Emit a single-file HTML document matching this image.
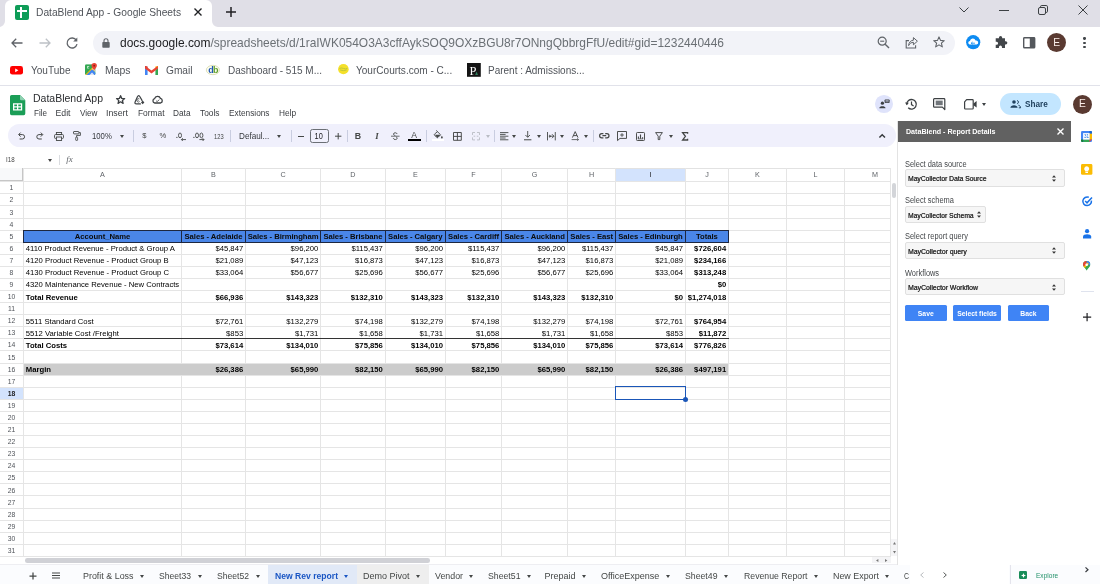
<!DOCTYPE html><html><head><meta charset="utf-8"><title>DataBlend App - Google Sheets</title><style>

*{box-sizing:border-box;margin:0;padding:0}
html,body{width:1100px;height:584px;overflow:hidden;background:#fff}
body{font-family:"Liberation Sans",sans-serif;position:relative;color:#202124;filter:blur(0.4px)}
.a{position:absolute}
.t{position:absolute;white-space:nowrap;line-height:1}
svg{position:absolute;overflow:visible}
/* chrome */
#tabstrip{left:0;top:0;width:1100px;height:27px;background:#e0dfe7}
#tab{left:5px;top:0;width:207px;height:27px;background:#fff;border-radius:6px 6px 0 0}
#navrow{left:0;top:27px;width:1100px;height:30px;background:#fff}
#omni{left:93px;top:31px;width:862px;height:23.5px;border-radius:12px;background:#f2f3f8}
#bmrow{left:0;top:57px;width:1100px;height:29.3px;background:#fff;border-bottom:1.2px solid #e1e2ea}
.bm{font-size:11.6px;color:#3c4043;top:64px}
/* sheets */
.menu{font-size:9.2px;color:#202124;top:108.5px}
#toolbar{left:7.6px;top:123.8px;width:888.4px;height:23.5px;border-radius:12px;background:#f0f0fc}
.gl{position:absolute;background:#e5e5e5}
.ch{position:absolute;font-size:7.2px;color:#4a4d52;text-align:center;top:171px;line-height:8px}
.rh{position:absolute;font-size:6.8px;color:#50545a;text-align:center;left:0;width:23px;line-height:8px}
.c{position:absolute;font-size:7.7px;line-height:12.1px;white-space:nowrap;color:#000;height:12.1px;overflow:visible}
.r{text-align:right}
.b{font-weight:bold}
.st{font-size:8.6px;color:#444746;top:571px;letter-spacing:.1px}
.car{position:absolute;width:0;height:0;border-left:2.6px solid transparent;border-right:2.6px solid transparent;border-top:3px solid #444746}
/* sidebar */
.lab{font-size:8.2px;color:#3c4043;left:905px}
.sel{position:absolute;left:904.5px;margin-top:-0.4px;height:17.2px;background:#f6f6f6;border:1px solid #e0e0e0;border-radius:2px}
.selt{font-size:6.9px;font-weight:bold;color:#222;left:908px}
.btn{position:absolute;top:304.8px;height:16.1px;background:#3f84f5;border-radius:1.5px;color:#fff;font-size:6.8px;font-weight:bold;text-align:center;line-height:17.3px}

</style></head><body>
<div class="a" id="tabstrip"></div>
<div class="a" id="tab"></div>
<svg style="left:-1px;top:21px" width="6" height="6"><path d="M6 0 V6 H0 A6 6 0 0 0 6 0Z" fill="#fff"/></svg>
<svg style="left:212px;top:21px" width="6" height="6"><path d="M0 0 V6 H6 A6 6 0 0 1 0 0Z" fill="#fff"/></svg>
<div class="a" style="left:15px;top:5px;width:14px;height:14.5px;background:#0f9d58;border-radius:2px"></div>
<div class="a" style="left:16.6px;top:10.4px;width:10.9px;height:2px;background:#fff"></div>
<div class="a" style="left:19.8px;top:7.2px;width:2px;height:10.8px;background:#fff"></div>
<div class="t" style="left:36.00px;top:7.88px;font-size:10.3px;color:#50545a;transform:scaleX(0.9933);transform-origin:left top;">DataBlend App - Google Sheets</div>
<svg style="left:194px;top:8px" width="8" height="8"><path d="M0.5 0.5 L7.5 7.5 M7.5 0.5 L0.5 7.5" stroke="#202124" stroke-width="1.4" fill="none"/></svg>
<svg style="left:226px;top:7px" width="10" height="10"><path d="M5 0 V10 M0 5 H10" stroke="#202124" stroke-width="1.5" fill="none"/></svg>
<svg style="left:959px;top:7px" width="10" height="6"><path d="M0.5 0.5 L5 5 L9.5 0.5" stroke="#3c4043" stroke-width="1" fill="none"/></svg>
<div class="a" style="left:999px;top:9.5px;width:10px;height:1px;background:#3c4043"></div>
<svg style="left:1038px;top:5px" width="10" height="10"><rect x="0.5" y="2.5" width="7" height="7" rx="1.5" stroke="#3c4043" fill="none"/><path d="M2.5 2.5 V1.8 A1.3 1.3 0 0 1 3.8 0.5 H8.2 A1.3 1.3 0 0 1 9.5 1.8 V6.2 A1.3 1.3 0 0 1 8.2 7.5 H7.5" stroke="#3c4043" fill="none"/></svg>
<svg style="left:1078px;top:5px" width="10" height="10"><path d="M0.5 0.5 L9.5 9.5 M9.5 0.5 L0.5 9.5" stroke="#3c4043" stroke-width="1" fill="none"/></svg>
<div class="a" id="navrow"></div>
<div class="a" id="omni"></div>
<svg style="left:11px;top:38px" width="12" height="10"><path d="M11.5 5 H1.2 M5.2 0.8 L1 5 L5.2 9.2" stroke="#5f6368" stroke-width="1.3" fill="none"/></svg>
<svg style="left:39px;top:38px" width="12" height="10"><path d="M0.5 5 H10.8 M6.8 0.8 L11 5 L6.8 9.2" stroke="#bdc1c6" stroke-width="1.3" fill="none"/></svg>
<svg style="left:66px;top:37px" width="12" height="12"><path d="M10.3 3.2 A5 5 0 1 0 11 7.2" stroke="#5f6368" stroke-width="1.3" fill="none"/><path d="M11.3 0.5 V4.6 H7.2Z" fill="#5f6368"/></svg>
<svg style="left:102px;top:37.5px" width="8" height="10"><rect x="0.3" y="4" width="7.4" height="5.7" rx="0.8" fill="#5f6368"/><path d="M2 4.2 V2.8 A2 2 0 0 1 6 2.8 V4.2" stroke="#5f6368" stroke-width="1.1" fill="none"/></svg>
<div class="t" style="left:120.00px;top:36.73px;font-size:12.6px;color:#6b7075;transform:scaleX(0.9504);transform-origin:left top;"><span style="color:#202124">docs.google.com</span>/spreadsheets/d/1raIWK054O3A3cffAykSOQ9OXzBGU8r7ONngQbbrgFfU/edit#gid=1232440446</div>
<div class="a" id="bmrow"></div>
<div class="t" style="left:30.50px;top:64.73px;font-size:10.6px;color:#50545a;transform:scaleX(0.9486);transform-origin:left top;">YouTube</div>
<div class="t" style="left:104.50px;top:64.73px;font-size:10.6px;color:#50545a;transform:scaleX(0.9843);transform-origin:left top;">Maps</div>
<div class="t" style="left:165.50px;top:64.73px;font-size:10.6px;color:#50545a;transform:scaleX(0.9577);transform-origin:left top;">Gmail</div>
<div class="t" style="left:227.50px;top:64.73px;font-size:10.6px;color:#50545a;transform:scaleX(0.9446);transform-origin:left top;">Dashboard - 515 M...</div>
<div class="t" style="left:356.30px;top:64.73px;font-size:10.6px;color:#50545a;transform:scaleX(0.9481);transform-origin:left top;">YourCourts.com - C...</div>
<div class="t" style="left:487.50px;top:64.73px;font-size:10.6px;color:#50545a;transform:scaleX(0.9419);transform-origin:left top;">Parent : Admissions...</div>
<!-- YouTube -->
<svg style="left:10.2px;top:65.8px" width="13" height="8.6" viewBox="0 0 13 8.6"><rect width="13" height="8.6" rx="2.4" fill="#f00"/><path d="M5.2 2.4 L8.4 4.3 L5.2 6.2Z" fill="#fff"/></svg>
<!-- Maps -->
<svg style="left:85.2px;top:63.4px" width="12.4" height="12.4" viewBox="0 0 12.4 12.4">
<defs><clipPath id="mclip"><rect x="0" y="1.2" width="10.6" height="10.8" rx="1.4"/></clipPath></defs>
<g clip-path="url(#mclip)"><rect x="0" y="1.2" width="10.6" height="10.8" fill="#34a853"/>
<path d="M0 12 L10.6 1.2 V5 L4 12Z" fill="#fbbc04"/>
<path d="M1.5 12 L7 6.2 L10.6 10 V12Z" fill="#4285f4"/>
<path d="M4.6 12 L7 9.4 L9.4 12Z" fill="#dfe6f5"/>
<path d="M7.2 6 L10.6 2.6 V9.6Z" fill="#e8eaed"/></g>
<path d="M9.2 0 A2.7 2.7 0 0 1 11.9 2.7 C11.9 4.6 9.6 5.6 9.2 8 C8.8 5.6 6.5 4.6 6.5 2.7 A2.7 2.7 0 0 1 9.2 0Z" fill="#ea4335"/>
<circle cx="9.2" cy="2.7" r="0.9" fill="#8c1d13"/>
<path d="M2 3 h2.2 v0.9 h-1.2 v0.8 h1.2 v0.9 h-2.2Z" fill="#d7efdd" opacity=".8"/>
</svg>
<!-- Gmail -->
<svg style="left:145.2px;top:65.5px" width="13" height="9" viewBox="0 0 13 9">
<path d="M0 1.2 V9 H2.6 V3.2Z" fill="#4285f4"/>
<path d="M13 1.2 V9 H10.4 V3.2Z" fill="#34a853"/>
<path d="M10.4 0.6 L13 0 V2 L10.4 4Z" fill="#fbbc04"/>
<path d="M0 0 L2.6 0.6 V4 L0 2Z" fill="#c5221f"/>
<path d="M0.3 0 L6.5 4.4 L12.7 0 L13 2.4 L6.5 7.4 L0 2.4Z" fill="#ea4335"/>
</svg>
<!-- db dashboard -->
<svg style="left:206.3px;top:64.8px" width="13.8" height="10" viewBox="0 0 13.8 10">
<ellipse cx="6.9" cy="5" rx="6.6" ry="4.7" fill="#fbfbef" stroke="#c9cf8e" stroke-width=".6"/>
<text x="2.2" y="8.1" font-family="Liberation Sans, sans-serif" font-weight="bold" font-size="9" fill="#1f56b3">d</text>
<text x="6.9" y="8.1" font-family="Liberation Sans, sans-serif" font-weight="bold" font-size="9" fill="#5f9f2c">b</text>
</svg>
<!-- YourCourts -->
<svg style="left:337.5px;top:64.3px" width="10.8" height="10.4" viewBox="0 0 10.8 10.4">
<ellipse cx="5.4" cy="5.2" rx="5.3" ry="5.1" fill="#f4e02a"/>
<path d="M1.4 4.6 Q3 3.4 5.4 4.4 T9.4 4.4 M2.2 6 Q5.4 7.2 8.6 6" stroke="#b9c23a" stroke-width=".9" fill="none"/>
</svg>
<!-- Parent P -->
<svg style="left:467px;top:63px" width="13.8" height="13.8" viewBox="0 0 13.8 13.8">
<rect width="13.8" height="13.8" fill="#141414"/>
<text x="2.6" y="11.6" font-family="Liberation Serif, serif" font-size="12.5" fill="#fff">P</text>
<path d="M8.2 12 L9.6 8.4 L11 12Z" fill="#2f7d5c"/>
</svg>

<!-- omnibox: zoom-out -->
<svg style="left:877px;top:35.5px" width="13" height="13" viewBox="0 0 13 13"><circle cx="5.2" cy="5.2" r="4" stroke="#5f6368" stroke-width="1.2" fill="none"/><path d="M8.2 8.2 L12 12" stroke="#5f6368" stroke-width="1.4"/><path d="M3.2 5.2 H7.2" stroke="#5f6368" stroke-width="1.1"/></svg>
<!-- share -->
<svg style="left:905px;top:36px" width="13" height="13" viewBox="0 0 13 13"><path d="M4 4.6 H1.2 V12 H10.6 V9.2" stroke="#5f6368" stroke-width="1.1" fill="none"/><path d="M3.6 9.6 C3.8 6.2 6 4.3 8.4 4.2 V1.6 L12.4 5.2 L8.4 8.8 V6.3 C6.4 6.3 4.8 7.4 3.6 9.6Z" stroke="#5f6368" stroke-width="1" fill="none" stroke-linejoin="round"/></svg>
<!-- star -->
<svg style="left:933.2px;top:36.4px" width="12" height="12" viewBox="0 0 12 12"><path d="M6 0.9 L7.5 4.4 L11.3 4.7 L8.4 7.2 L9.3 10.9 L6 8.9 L2.7 10.9 L3.6 7.2 L0.7 4.7 L4.5 4.4Z" stroke="#5f6368" stroke-width="1.1" fill="none" stroke-linejoin="round"/></svg>
<!-- blue ext -->
<svg style="left:966.2px;top:35.4px" width="14.4" height="14.4" viewBox="0 0 14.4 14.4"><circle cx="7.2" cy="7.2" r="7.1" fill="#0d8bf2"/><path d="M3.6 9.6 A1.9 1.9 0 0 1 3.9 5.9 A3 3 0 0 1 9.6 5.5 A2.1 2.1 0 0 1 10.6 9.6Z" fill="#fff"/><path d="M5.2 8.2 H9 M5.2 8.2 L6.6 7 M5.2 8.2 L6.6 9.2" stroke="#0d8bf2" stroke-width=".8" fill="none"/></svg>
<!-- puzzle -->
<svg style="left:994.4px;top:35.4px" width="14" height="14" viewBox="0 0 13 13"><path d="M4.6 2.4 A1.5 1.5 0 0 1 7.6 2.4 V3 H10.2 V5.8 H10.9 A1.5 1.5 0 0 1 10.9 8.8 H10.2 V12 H7.4 V11.2 A1.4 1.4 0 0 0 4.6 11.2 V12 H1.6 V9 H2.4 A1.4 1.4 0 0 0 2.4 6.2 H1.6 V3 H4.6Z" fill="#42464a"/></svg>
<!-- side panel -->
<svg style="left:1022.8px;top:36.8px" width="12.4" height="11.4" viewBox="0 0 12.4 11.4"><rect x="0.7" y="0.7" width="11" height="10" rx="0.8" stroke="#54585d" stroke-width="1.4" fill="#fff"/><rect x="6.8" y="0.7" width="4.9" height="10" fill="#54585d"/></svg>
<!-- avatar -->
<div class="a" style="left:1047.2px;top:33px;width:19.2px;height:19.2px;border-radius:50%;background:#5a3a31"></div>
<div class="t" style="left:1053.3px;top:37.5px;font-size:10.2px;color:#fbeee9">E</div>
<!-- dots -->
<div class="a" style="left:1083.3px;top:37.4px;width:2.3px;height:2.3px;border-radius:50%;background:#42464a"></div>
<div class="a" style="left:1083.3px;top:41.5px;width:2.3px;height:2.3px;border-radius:50%;background:#42464a"></div>
<div class="a" style="left:1083.3px;top:45.6px;width:2.3px;height:2.3px;border-radius:50%;background:#42464a"></div>

<div class="t" style="left:33.00px;top:94.33px;font-size:10.0px;color:#2a2c2f;transform:scaleX(1.0492);transform-origin:left top;">DataBlend App</div>
<div class="t" style="left:33.80px;top:108.94px;font-size:8.7px;color:#3a3d41;transform:scaleX(0.9286);transform-origin:left top;">File</div>
<div class="t" style="left:55.50px;top:108.94px;font-size:8.7px;color:#3a3d41;">Edit</div>
<div class="t" style="left:79.50px;top:108.94px;font-size:8.7px;color:#3a3d41;transform:scaleX(0.9365);transform-origin:left top;">View</div>
<div class="t" style="left:106.00px;top:108.94px;font-size:8.7px;color:#3a3d41;transform:scaleX(1.0122);transform-origin:left top;">Insert</div>
<div class="t" style="left:137.50px;top:108.94px;font-size:8.7px;color:#3a3d41;transform:scaleX(0.9631);transform-origin:left top;">Format</div>
<div class="t" style="left:173.00px;top:108.94px;font-size:8.7px;color:#3a3d41;transform:scaleX(0.9532);transform-origin:left top;">Data</div>
<div class="t" style="left:200.00px;top:108.94px;font-size:8.7px;color:#3a3d41;transform:scaleX(0.9615);transform-origin:left top;">Tools</div>
<div class="t" style="left:229.00px;top:108.94px;font-size:8.7px;color:#3a3d41;transform:scaleX(0.9529);transform-origin:left top;">Extensions</div>
<div class="t" style="left:278.70px;top:108.94px;font-size:8.7px;color:#3a3d41;transform:scaleX(0.9566);transform-origin:left top;">Help</div>
<!-- Sheets logo -->
<svg style="left:10.1px;top:95.4px" width="15.3" height="20.2" viewBox="0 0 15.3 20.2">
<path d="M1.6 0 H10 L15.3 5.3 V18.6 A1.6 1.6 0 0 1 13.7 20.2 H1.6 A1.6 1.6 0 0 1 0 18.6 V1.6 A1.6 1.6 0 0 1 1.6 0Z" fill="#1b9e57"/>
<path d="M10 0 L15.3 5.3 H11.2 A1.2 1.2 0 0 1 10 4.1Z" fill="#8ed1b1"/>
<path d="M3 8.2 H12.2 V15.6 H3Z M4.3 9.5 V11.2 H7 V9.5Z M8.3 9.5 V11.2 H10.9 V9.5Z M4.3 12.5 V14.3 H7 V12.5Z M8.3 12.5 V14.3 H10.9 V12.5Z" fill="#fff" fill-rule="evenodd"/>
</svg>
<!-- star -->
<svg style="left:115.9px;top:94.6px" width="9.2" height="9.2" viewBox="0 0 12 12"><path d="M6 0.9 L7.5 4.4 L11.3 4.7 L8.4 7.2 L9.3 10.9 L6 8.9 L2.7 10.9 L3.6 7.2 L0.7 4.7 L4.5 4.4Z" stroke="#3c4043" stroke-width="1.7" fill="none" stroke-linejoin="round"/></svg>
<!-- move to drive -->
<svg style="left:133.8px;top:94.5px" width="10.6" height="9.8" viewBox="0 0 10.6 9.8"><path d="M6.4 8.9 H2.6 Q0.2 8.9 1.2 6.7 L3.3 2 Q4.7 -0.6 6.1 2 L8 5.4" stroke="#3c4043" stroke-width="1.2" fill="none" stroke-linejoin="round" stroke-linecap="round"/><path d="M5.4 3.9 A1.7 1.7 0 1 0 5.6 6.6 M4.7 5.3 H3.6" stroke="#3c4043" stroke-width=".8" fill="none"/><path d="M8.7 5.5 L10.4 7.4 L8.7 9.3 L7 7.4Z" fill="#3c4043"/></svg>
<!-- cloud done -->
<svg style="left:151.9px;top:95.6px" width="11.2" height="7.6" viewBox="0 0 11.2 7.6"><path d="M2.8 7 A2.2 2.2 0 0 1 2.6 2.7 A3.1 3.1 0 0 1 8.5 2.4 A2.4 2.4 0 0 1 8.6 7Z" stroke="#3c4043" stroke-width="1.3" fill="none"/><path d="M4.2 4.8 L5.2 5.7 L7.2 3.6" stroke="#3c4043" stroke-width=".9" fill="none"/></svg>

<!-- right: presence/activity with lavender circle -->
<div class="a" style="left:874.9px;top:94.9px;width:17.8px;height:17.8px;border-radius:50%;background:#dfe3fb"></div>
<svg style="left:878.6px;top:99.2px" width="11" height="9.6" viewBox="0 0 11 9.6"><circle cx="3.4" cy="4.2" r="1.6" fill="#3c4043"/><path d="M0.3 9.2 C0.3 6.6 6.5 6.6 6.5 9.2Z" fill="#3c4043"/><rect x="5.6" y="0.4" width="5" height="3.6" rx=".8" fill="#3c4043"/><path d="M6.5 1.6 H9.7 M6.5 2.8 H9.7" stroke="#dfe3fb" stroke-width=".6"/></svg>
<!-- history -->
<svg style="left:904.6px;top:97.6px" width="12.4" height="12.4" viewBox="0 0 12.4 12.4"><path d="M1.7 6.4 A4.8 4.8 0 1 1 3.2 9.8" stroke="#3c4043" stroke-width="1.3" fill="none"/><path d="M0 4.6 L1.8 7.2 L3.9 4.8Z" fill="#3c4043"/><path d="M6.5 3.6 V6.6 L8.6 7.9" stroke="#3c4043" stroke-width="1.2" fill="none"/></svg>
<!-- comment -->
<svg style="left:933px;top:98px" width="12.4" height="12" viewBox="0 0 12.4 12"><path d="M1.4 0.6 H11 A0.8 0.8 0 0 1 11.8 1.4 V11.6 L9.4 9.2 H1.4 A0.8 0.8 0 0 1 0.6 8.4 V1.4 A0.8 0.8 0 0 1 1.4 0.6Z" stroke="#3c4043" stroke-width="1.2" fill="none" stroke-linejoin="round"/><rect x="2.7" y="2.6" width="7" height="4.6" fill="#70757a"/></svg>
<!-- camera -->
<svg style="left:964.2px;top:98.6px" width="13" height="10.6" viewBox="0 0 13 10.6"><path d="M2.6 0.6 H8.4 A0.8 0.8 0 0 1 9.2 1.4 V9.2 A0.8 0.8 0 0 1 8.4 10 H1.4 A0.8 0.8 0 0 1 0.6 9.2 V2.8Z" stroke="#3c4043" stroke-width="1.2" fill="none" stroke-linejoin="round"/><path d="M9.4 4.4 L12.6 2 V8.6 L9.4 6.2Z" fill="#3c4043"/></svg>
<div class="car" style="left:982.2px;top:102.8px;border-top-color:#3c4043"></div>
<!-- Share -->
<div class="a" style="left:1000.3px;top:92.6px;width:61.2px;height:22.8px;border-radius:11.4px;background:#c3e6ff"></div>
<svg style="left:1009.6px;top:100px" width="11" height="8" viewBox="0 0 11 8"><circle cx="4" cy="2" r="1.8" fill="#21425f"/><path d="M0.4 7.8 C0.4 4.4 7.6 4.4 7.6 7.8Z" fill="#21425f"/><path d="M7.2 0.4 A1.8 1.8 0 0 1 7.2 3.8 M8.4 5.2 C9.8 5.6 10.6 6.4 10.6 7.8 H8.8" stroke="#21425f" stroke-width="1" fill="none"/></svg>
<!-- avatar -->
<div class="a" style="left:1073.1px;top:94.7px;width:19px;height:19px;border-radius:50%;background:#5a3a31"></div>
<div class="t" style="left:1079.1px;top:99.2px;font-size:10.2px;color:#fbeee9">E</div>

<div class="t" style="left:1024.50px;top:99.44px;font-size:9.4px;color:#21425f;transform:scaleX(0.8748);transform-origin:left top;font-weight:bold;">Share</div>
<div class="a" id="toolbar"></div>
<!-- toolbar icons, centre y=136 -->

<!-- undo c=22 -->
<svg style="left:18.4px;top:132.4px" width="7.4" height="7.6" viewBox="0 0 7.4 7.6"><path d="M1 2.6 H4.4 A2.2 2.2 0 0 1 4.4 7 H1.6" stroke="#444746" stroke-width="1" fill="none"/><path d="M2.6 0.6 L0.6 2.6 L2.6 4.6" stroke="#444746" stroke-width="1" fill="none"/></svg>
<!-- redo c=40 -->
<svg style="left:36.4px;top:132.4px" width="7.4" height="7.6" viewBox="0 0 7.4 7.6"><path d="M6.4 2.6 H3 A2.2 2.2 0 0 0 3 7 H5.8" stroke="#444746" stroke-width="1" fill="none"/><path d="M4.8 0.6 L6.8 2.6 L4.8 4.6" stroke="#444746" stroke-width="1" fill="none"/></svg>
<!-- print c=58.8 -->
<svg style="left:53.8px;top:131.6px" width="10" height="9" viewBox="0 0 10 9"><rect x="2.4" y="0.5" width="5.2" height="2" stroke="#444746" stroke-width=".9" fill="none"/><rect x="0.5" y="2.6" width="9" height="3.8" rx=".9" stroke="#444746" stroke-width=".9" fill="none"/><rect x="2.4" y="5" width="5.2" height="3.5" stroke="#444746" stroke-width=".9" fill="#f0f0fc"/></svg>
<!-- paint format c=77 -->
<svg style="left:73px;top:131.2px" width="8" height="10" viewBox="0 0 8 10"><rect x="0.5" y="0.5" width="5.4" height="2.4" rx=".5" stroke="#444746" stroke-width=".9" fill="none"/><path d="M5.9 1.6 H7.4 V4.4 H3.6 V6.2" stroke="#444746" stroke-width=".9" fill="none"/><rect x="2.7" y="6.2" width="1.9" height="3.2" rx=".4" stroke="#444746" stroke-width=".8" fill="none"/></svg>
<!-- $ % -->
<!-- .0<- c=180.6 -->
<svg style="left:175.6px;top:131.6px" width="10.5" height="9.4" viewBox="0 0 10.5 9.4"><circle cx="0.9" cy="5.4" r=".6" fill="#444746"/><ellipse cx="4" cy="3.4" rx="1.5" ry="2.4" stroke="#444746" stroke-width=".9" fill="none"/><path d="M10 7.6 H5.4 M6.8 6.2 L5.4 7.6 L6.8 9" stroke="#444746" stroke-width=".9" fill="none"/></svg>
<!-- .00-> c=199.4 -->
<svg style="left:193.2px;top:131.6px" width="12.5" height="9.4" viewBox="0 0 12.5 9.4"><circle cx="0.9" cy="5.4" r=".6" fill="#444746"/><ellipse cx="4" cy="3.4" rx="1.5" ry="2.4" stroke="#444746" stroke-width=".9" fill="none"/><ellipse cx="8.4" cy="3.4" rx="1.5" ry="2.4" stroke="#444746" stroke-width=".9" fill="none"/><path d="M6.4 7.6 H11 M9.6 6.2 L11 7.6 L9.6 9" stroke="#444746" stroke-width=".9" fill="none"/></svg>
<!-- minus c=301.1 -->
<div class="a" style="left:298.1px;top:135.6px;width:6px;height:1px;background:#444746"></div>
<!-- size box -->
<div class="a" style="left:309.5px;top:128.7px;width:19.3px;height:13.9px;border:0.9px solid #6b6f75;border-radius:2.4px"></div>
<!-- plus c=337.7 -->
<svg style="left:334.5px;top:132.9px" width="6.4" height="6.4" viewBox="0 0 6.4 6.4"><path d="M3.2 0 V6.4 M0 3.2 H6.4" stroke="#444746" stroke-width="1"/></svg>
<!-- strikethrough S c=395.3 -->
<svg style="left:391px;top:132px" width="8.6" height="8.4" viewBox="0 0 8.6 8.4"><path d="M6.2 2 C5.8 0.4 2.6 0.3 2.5 2 C2.5 3 3.6 3.4 4.3 3.6 M2.2 6.2 C2.6 8 6.2 8 6.2 6.2 C6.2 5.6 5.8 5.2 5.2 4.9" stroke="#444746" stroke-width=".9" fill="none"/><path d="M0 4.2 H8.6" stroke="#444746" stroke-width=".8"/></svg>
<!-- text colour A c=414.1 -->
<div class="a" style="left:407.8px;top:139.2px;width:13px;height:1.8px;background:#000"></div>
<!-- fill bucket c=437.7 -->
<svg style="left:433.6px;top:130px" width="9" height="8.6" viewBox="0 0 9 8.6"><path d="M2.2 0.4 L6.6 4.8 L4 7.4 A0.9 0.9 0 0 1 2.7 7.4 L0.6 5.3 A0.9 0.9 0 0 1 0.6 4 L3.5 1.7" stroke="#444746" stroke-width=".9" fill="none"/><path d="M0.9 4.8 H6.4 L4 7.2 A0.8 0.8 0 0 1 2.8 7.2Z" fill="#444746"/><path d="M7.9 5.8 C8.4 6.6 8.8 7 8.8 7.5 A0.9 0.9 0 0 1 7 7.5 C7 7 7.4 6.6 7.9 5.8Z" fill="#444746"/></svg>
<div class="a" style="left:431.6px;top:139.4px;width:12.6px;height:1.8px;background:#fff"></div>
<!-- borders c=457.3 -->
<svg style="left:452.9px;top:131.6px" width="8.8" height="8.8" viewBox="0 0 8.8 8.8"><path d="M0.5 0.5 H8.3 V8.3 H0.5Z M4.4 0.5 V8.3 M0.5 4.4 H8.3" stroke="#444746" stroke-width=".95" fill="none"/></svg>
<!-- merge (disabled) c=476.4 -->
<svg style="left:472.4px;top:131.8px" width="8" height="8.4" viewBox="0 0 8 8.4"><path d="M0.5 3 V0.5 H3 M5 0.5 H7.5 V3 M7.5 5.4 V7.9 H5 M3 7.9 H0.5 V5.4" stroke="#b9bcc4" stroke-width=".9" fill="none"/><path d="M1.6 4.2 H3.2 M4.8 4.2 H6.4" stroke="#b9bcc4" stroke-width=".9"/></svg>
<!-- align c=504.1 -->
<svg style="left:500px;top:131.8px" width="8.4" height="8.4" viewBox="0 0 8.4 8.4"><path d="M0 0.6 H8.4 M0 2.4 H5.6 M0 4.2 H8.4 M0 6 H5.6 M0 7.8 H8.4" stroke="#444746" stroke-width=".9"/></svg>
<!-- valign c=527.7 -->
<svg style="left:524px;top:131.4px" width="7.4" height="9.4" viewBox="0 0 7.4 9.4"><path d="M3.7 0 V6.2 M1.4 4 L3.7 6.3 L6 4" stroke="#444746" stroke-width=".9" fill="none"/><path d="M0 8.8 H7.4" stroke="#444746" stroke-width="1"/></svg>
<!-- wrap c=551.4 -->
<svg style="left:547px;top:131.8px" width="8.8" height="8.4" viewBox="0 0 8.8 8.4"><path d="M0.5 0 V8.4 M8.3 0 V8.4" stroke="#444746" stroke-width=".9"/><path d="M1.8 4.2 H7 M5 2.2 L7 4.2 L5 6.2" stroke="#444746" stroke-width=".9" fill="none"/><path d="M2.4 2.4 L4.2 4.2 L2.4 6Z" fill="#444746"/></svg>
<!-- rotate c=575 -->
<svg style="left:570.6px;top:131.4px" width="9" height="9.6" viewBox="0 0 9 9.6"><path d="M1.4 6.6 L4.2 0.6 L7 6.6 M2.4 4.6 H6" stroke="#444746" stroke-width=".95" fill="none"/><path d="M0.6 8.6 H7.2 M6.2 7.4 L7.6 8.6 L6.2 9.6" stroke="#444746" stroke-width=".8" fill="none"/></svg>
<!-- link c=603.9 -->
<svg style="left:598.6px;top:133.4px" width="10.6" height="5.4" viewBox="0 0 10.6 5.4"><path d="M4.4 0.6 H2.7 A2.1 2.1 0 0 0 2.7 4.8 H4.4 M6.2 0.6 H7.9 A2.1 2.1 0 0 1 7.9 4.8 H6.2 M3.4 2.7 H7.2" stroke="#444746" stroke-width="1.2" fill="none"/></svg>
<!-- add comment c=622.3 -->
<svg style="left:617.4px;top:131.2px" width="10" height="10" viewBox="0 0 10 10"><path d="M0.5 0.5 H9.5 V7.4 H3 L0.5 9.6Z" stroke="#444746" stroke-width=".95" fill="none" stroke-linejoin="round"/><path d="M5 2.2 V5.8 M3.2 4 H6.8" stroke="#444746" stroke-width=".9"/></svg>
<!-- chart c=640.7 -->
<svg style="left:636.2px;top:131.6px" width="9" height="9" viewBox="0 0 9 9"><rect x="0.5" y="0.5" width="8" height="8" rx=".8" stroke="#444746" stroke-width=".95" fill="none"/><path d="M2.4 6.8 V4.4 M4.5 6.8 V2.4 M6.6 6.8 V5.2" stroke="#444746" stroke-width="1.1"/><path d="M1.8 6.9 H7.2" stroke="#444746" stroke-width=".7"/></svg>
<!-- filter c=659 -->
<svg style="left:655px;top:132px" width="8" height="8.4" viewBox="0 0 8 8.4"><path d="M0.6 0.6 H7.4 L4.8 4.2 V7.6 H3.2 V4.2Z" stroke="#444746" stroke-width=".95" fill="none" stroke-linejoin="round"/></svg>
<!-- sigma c=685.4 -->
<svg style="left:682.4px;top:131.8px" width="6" height="8.6" viewBox="0 0 6 8.6"><path d="M5.6 1.8 V0.6 H0.6 L3.4 4.3 L0.6 8 H5.6 V6.8" stroke="#444746" stroke-width="1.3" fill="none" stroke-linejoin="miter"/></svg>
<!-- collapse chevron c=881.8 -->
<svg style="left:878.6px;top:134px" width="6.4" height="4" viewBox="0 0 6.4 4"><path d="M0.4 3.6 L3.2 0.7 L6 3.6" stroke="#33363a" stroke-width="1.4" fill="none"/></svg>


<div class="t" style="left:92.30px;top:131.79px;font-size:8.4px;color:#35383c;transform:scaleX(0.9243);transform-origin:left top;">100%</div>
<div class="t" style="left:142.20px;top:132.27px;font-size:7.6px;color:#444746;">$</div>
<div class="t" style="left:159.40px;top:132.37px;font-size:7.6px;color:#444746;">%</div>
<div class="t" style="left:214.00px;top:132.67px;font-size:7.0px;color:#444746;transform:scaleX(0.8214);transform-origin:left top;">123</div>
<div class="t" style="left:239.40px;top:131.79px;font-size:8.4px;color:#35383c;transform:scaleX(0.9743);transform-origin:left top;">Defaul...</div>
<div class="t" style="left:314.44px;top:131.79px;font-size:8.4px;color:#202124;transform:scaleX(0.8791);transform-origin:center top;">10</div>
<div class="t" style="left:354.82px;top:131.65px;font-size:8.8px;color:#444746;font-weight:bold;">B</div>
<div class="t" style="left:375.18px;top:131.65px;font-size:8.8px;color:#444746;font-weight:bold;font-style:italic;font-family:'Liberation Serif',serif;">I</div>
<div class="t" style="left:411.33px;top:130.92px;font-size:8.6px;color:#444746;">A</div>
<div class="a" style="left:132.6px;top:130px;width:1px;height:12px;background:#c9cde0"></div>
<div class="a" style="left:229.9px;top:130px;width:1px;height:12px;background:#c9cde0"></div>
<div class="a" style="left:290.5px;top:130px;width:1px;height:12px;background:#c9cde0"></div>
<div class="a" style="left:346.7px;top:130px;width:1px;height:12px;background:#c9cde0"></div>
<div class="a" style="left:425.7px;top:130px;width:1px;height:12px;background:#c9cde0"></div>
<div class="a" style="left:494.1px;top:130px;width:1px;height:12px;background:#c9cde0"></div>
<div class="a" style="left:592.7px;top:130px;width:1px;height:12px;background:#c9cde0"></div>
<div class="car" style="left:120.19999999999999px;top:134.8px;border-top-color:#444746"></div>
<div class="car" style="left:277.40000000000003px;top:134.8px;border-top-color:#444746"></div>
<div class="car" style="left:485.90000000000003px;top:134.8px;border-top-color:#b9bcc4"></div>
<div class="car" style="left:512.3000000000001px;top:134.8px;border-top-color:#444746"></div>
<div class="car" style="left:536.5px;top:134.8px;border-top-color:#444746"></div>
<div class="car" style="left:559.6px;top:134.8px;border-top-color:#444746"></div>
<div class="car" style="left:583.7px;top:134.8px;border-top-color:#444746"></div>
<div class="car" style="left:669.1px;top:134.8px;border-top-color:#444746"></div>
<div class="t" style="left:5.80px;top:155.51px;font-size:7.2px;color:#444;transform:scaleX(0.8600);transform-origin:left top;">I18</div>
<div class="car" style="left:47.5px;top:158.5px;border-top-color:#444"></div>
<div class="a" style="left:59px;top:155px;width:1px;height:10px;background:#dadce0"></div>
<div class="t" style="left:66.3px;top:154.6px;font-size:9px;color:#62666b;font-style:italic;font-family:'Liberation Serif',serif">fx</div>
<div class="a" style="left:0;top:168px;width:891px;height:13.5px;background:#fff;border-top:1px solid #e2e2e2"></div>
<div class="a" style="left:0;top:168px;width:23.5px;height:13.5px;background:#f8f9fa;border-right:2.5px solid #c6c6c6;border-bottom:2px solid #c6c6c6"></div>
<div class="a" style="left:615.7px;top:168.5px;width:69.69999999999993px;height:13px;background:#d3e3fd"></div>
<div class="a" style="left:0;top:387.228px;width:23.5px;height:12.084px;background:#d3e3fd"></div>
<div class="a" style="left:23.5px;top:230.13600000000002px;width:705.0px;height:12.084px;background:#4a86e8"></div>
<div class="a" style="left:23.5px;top:363.06px;width:705.0px;height:12.084px;background:#cccccc"></div>
<div class="gl" style="left:0;top:181.30px;width:891px;height:1px"></div>
<div class="gl" style="left:0;top:193.38px;width:891px;height:1px"></div>
<div class="gl" style="left:0;top:205.47px;width:891px;height:1px"></div>
<div class="gl" style="left:0;top:217.55px;width:891px;height:1px"></div>
<div class="gl" style="left:0;top:229.64px;width:891px;height:1px"></div>
<div class="gl" style="left:0;top:241.72px;width:891px;height:1px"></div>
<div class="gl" style="left:0;top:253.80px;width:891px;height:1px"></div>
<div class="gl" style="left:0;top:265.89px;width:891px;height:1px"></div>
<div class="gl" style="left:0;top:277.97px;width:891px;height:1px"></div>
<div class="gl" style="left:0;top:290.06px;width:891px;height:1px"></div>
<div class="gl" style="left:0;top:302.14px;width:891px;height:1px"></div>
<div class="gl" style="left:0;top:314.22px;width:891px;height:1px"></div>
<div class="gl" style="left:0;top:326.31px;width:891px;height:1px"></div>
<div class="gl" style="left:0;top:338.39px;width:891px;height:1px"></div>
<div class="gl" style="left:0;top:350.48px;width:891px;height:1px"></div>
<div class="gl" style="left:0;top:362.56px;width:891px;height:1px"></div>
<div class="gl" style="left:0;top:374.64px;width:891px;height:1px"></div>
<div class="gl" style="left:0;top:386.73px;width:891px;height:1px"></div>
<div class="gl" style="left:0;top:398.81px;width:891px;height:1px"></div>
<div class="gl" style="left:0;top:410.90px;width:891px;height:1px"></div>
<div class="gl" style="left:0;top:422.98px;width:891px;height:1px"></div>
<div class="gl" style="left:0;top:435.06px;width:891px;height:1px"></div>
<div class="gl" style="left:0;top:447.15px;width:891px;height:1px"></div>
<div class="gl" style="left:0;top:459.23px;width:891px;height:1px"></div>
<div class="gl" style="left:0;top:471.32px;width:891px;height:1px"></div>
<div class="gl" style="left:0;top:483.40px;width:891px;height:1px"></div>
<div class="gl" style="left:0;top:495.48px;width:891px;height:1px"></div>
<div class="gl" style="left:0;top:507.57px;width:891px;height:1px"></div>
<div class="gl" style="left:0;top:519.65px;width:891px;height:1px"></div>
<div class="gl" style="left:0;top:531.74px;width:891px;height:1px"></div>
<div class="gl" style="left:0;top:543.82px;width:891px;height:1px"></div>
<div class="gl" style="left:0;top:555.90px;width:891px;height:1px"></div>
<div class="gl" style="left:23.0px;top:168px;width:1px;height:388.9px"></div>
<div class="gl" style="left:181.0px;top:168px;width:1px;height:388.9px"></div>
<div class="gl" style="left:245.0px;top:168px;width:1px;height:388.9px"></div>
<div class="gl" style="left:320.2px;top:168px;width:1px;height:388.9px"></div>
<div class="gl" style="left:384.7px;top:168px;width:1px;height:388.9px"></div>
<div class="gl" style="left:444.9px;top:168px;width:1px;height:388.9px"></div>
<div class="gl" style="left:501.2px;top:168px;width:1px;height:388.9px"></div>
<div class="gl" style="left:567.1px;top:168px;width:1px;height:388.9px"></div>
<div class="gl" style="left:615.2px;top:168px;width:1px;height:388.9px"></div>
<div class="gl" style="left:684.9px;top:168px;width:1px;height:388.9px"></div>
<div class="gl" style="left:728.0px;top:168px;width:1px;height:388.9px"></div>
<div class="gl" style="left:785.9px;top:168px;width:1px;height:388.9px"></div>
<div class="gl" style="left:844.2px;top:168px;width:1px;height:388.9px"></div>
<div class="gl" style="left:890.2px;top:168px;width:1px;height:388.9px"></div>
<div class="a" style="left:23.5px;top:363.56px;width:704.5px;height:11.084px;background:#cccccc"></div>
<div class="a" style="left:23.0px;top:229.63600000000002px;width:706.0px;height:13.084px;background:#4a86e8;border:1px solid #1d2740"></div>
<div class="a" style="left:181.0px;top:230.13600000000002px;width:1px;height:12.084px;background:#1d2740"></div>
<div class="a" style="left:245.0px;top:230.13600000000002px;width:1px;height:12.084px;background:#1d2740"></div>
<div class="a" style="left:320.2px;top:230.13600000000002px;width:1px;height:12.084px;background:#1d2740"></div>
<div class="a" style="left:384.7px;top:230.13600000000002px;width:1px;height:12.084px;background:#1d2740"></div>
<div class="a" style="left:444.9px;top:230.13600000000002px;width:1px;height:12.084px;background:#1d2740"></div>
<div class="a" style="left:501.2px;top:230.13600000000002px;width:1px;height:12.084px;background:#1d2740"></div>
<div class="a" style="left:567.1px;top:230.13600000000002px;width:1px;height:12.084px;background:#1d2740"></div>
<div class="a" style="left:615.2px;top:230.13600000000002px;width:1px;height:12.084px;background:#1d2740"></div>
<div class="a" style="left:684.9px;top:230.13600000000002px;width:1px;height:12.084px;background:#1d2740"></div>
<div class="a" style="left:23.5px;top:338.192px;width:705.0px;height:1.3px;background:#333"></div>
<div class="ch" style="left:23.5px;width:158.0px;color:#5f6368">A</div>
<div class="ch" style="left:181.5px;width:64.0px;color:#5f6368">B</div>
<div class="ch" style="left:245.5px;width:75.19999999999999px;color:#5f6368">C</div>
<div class="ch" style="left:320.7px;width:64.5px;color:#5f6368">D</div>
<div class="ch" style="left:385.2px;width:60.19999999999999px;color:#5f6368">E</div>
<div class="ch" style="left:445.4px;width:56.30000000000001px;color:#5f6368">F</div>
<div class="ch" style="left:501.7px;width:65.90000000000003px;color:#5f6368">G</div>
<div class="ch" style="left:567.6px;width:48.10000000000002px;color:#5f6368">H</div>
<div class="ch" style="left:615.7px;width:69.69999999999993px;color:#202124">I</div>
<div class="ch" style="left:685.4px;width:43.10000000000002px;color:#5f6368">J</div>
<div class="ch" style="left:728.5px;width:57.89999999999998px;color:#5f6368">K</div>
<div class="ch" style="left:786.4px;width:58.30000000000007px;color:#5f6368">L</div>
<div class="ch" style="left:844.7px;width:60.59999999999991px;color:#5f6368">M</div>
<div class="rh" style="top:184.40px;">1</div>
<div class="rh" style="top:196.48px;">2</div>
<div class="rh" style="top:208.57px;">3</div>
<div class="rh" style="top:220.65px;">4</div>
<div class="rh" style="top:232.74px;">5</div>
<div class="rh" style="top:244.82px;">6</div>
<div class="rh" style="top:256.90px;">7</div>
<div class="rh" style="top:268.99px;">8</div>
<div class="rh" style="top:281.07px;">9</div>
<div class="rh" style="top:293.16px;">10</div>
<div class="rh" style="top:305.24px;">11</div>
<div class="rh" style="top:317.32px;">12</div>
<div class="rh" style="top:329.41px;">13</div>
<div class="rh" style="top:341.49px;">14</div>
<div class="rh" style="top:353.58px;">15</div>
<div class="rh" style="top:365.66px;">16</div>
<div class="rh" style="top:377.74px;">17</div>
<div class="rh" style="top:389.83px;font-weight:bold;color:#202124;">18</div>
<div class="rh" style="top:401.91px;">19</div>
<div class="rh" style="top:414.00px;">20</div>
<div class="rh" style="top:426.08px;">21</div>
<div class="rh" style="top:438.16px;">22</div>
<div class="rh" style="top:450.25px;">23</div>
<div class="rh" style="top:462.33px;">24</div>
<div class="rh" style="top:474.42px;">25</div>
<div class="rh" style="top:486.50px;">26</div>
<div class="rh" style="top:498.58px;">27</div>
<div class="rh" style="top:510.67px;">28</div>
<div class="rh" style="top:522.75px;">29</div>
<div class="rh" style="top:534.84px;">30</div>
<div class="rh" style="top:546.92px;">31</div>
<div class="c b" style="left:23.5px;top:231.24px;width:158.0px;text-align:center;color:#0b0b0b;letter-spacing:-0.05px">Account_Name</div>
<div class="c b" style="left:181.5px;top:231.24px;width:64.0px;text-align:center;color:#0b0b0b;letter-spacing:-0.05px">Sales - Adelaide</div>
<div class="c b" style="left:245.5px;top:231.24px;width:75.19999999999999px;text-align:center;color:#0b0b0b;letter-spacing:-0.05px">Sales - Birmingham</div>
<div class="c b" style="left:320.7px;top:231.24px;width:64.5px;text-align:center;color:#0b0b0b;letter-spacing:-0.05px">Sales - Brisbane</div>
<div class="c b" style="left:385.2px;top:231.24px;width:60.19999999999999px;text-align:center;color:#0b0b0b;letter-spacing:-0.05px">Sales - Calgary</div>
<div class="c b" style="left:445.4px;top:231.24px;width:56.30000000000001px;text-align:center;color:#0b0b0b;letter-spacing:-0.05px">Sales - Cardiff</div>
<div class="c b" style="left:501.7px;top:231.24px;width:65.90000000000003px;text-align:center;color:#0b0b0b;letter-spacing:-0.05px">Sales - Auckland</div>
<div class="c b" style="left:567.6px;top:231.24px;width:48.10000000000002px;text-align:center;color:#0b0b0b;letter-spacing:-0.05px">Sales - East</div>
<div class="c b" style="left:615.7px;top:231.24px;width:69.69999999999993px;text-align:center;color:#0b0b0b;letter-spacing:-0.05px">Sales - Edinburgh</div>
<div class="c b" style="left:685.4px;top:231.24px;width:43.10000000000002px;text-align:center;color:#0b0b0b;letter-spacing:-0.05px">Totals</div>
<div class="c" style="left:25.8px;top:243.17px">4110 Product Revenue - Product &amp; Group A</div>
<div class="c r" style="left:181.5px;top:243.17px;width:61.7px">$45,847</div>
<div class="c r" style="left:245.5px;top:243.17px;width:72.89999999999999px">$96,200</div>
<div class="c r" style="left:320.7px;top:243.17px;width:62.2px">$115,437</div>
<div class="c r" style="left:385.2px;top:243.17px;width:57.89999999999999px">$96,200</div>
<div class="c r" style="left:445.4px;top:243.17px;width:54.000000000000014px">$115,437</div>
<div class="c r" style="left:501.7px;top:243.17px;width:63.60000000000004px">$96,200</div>
<div class="c r" style="left:567.6px;top:243.17px;width:45.800000000000026px">$115,437</div>
<div class="c r" style="left:615.7px;top:243.17px;width:67.39999999999993px">$45,847</div>
<div class="c r b" style="left:685.4px;top:243.17px;width:40.800000000000026px">$726,604</div>
<div class="c" style="left:25.8px;top:255.25px">4120 Product Revenue - Product Group B</div>
<div class="c r" style="left:181.5px;top:255.25px;width:61.7px">$21,089</div>
<div class="c r" style="left:245.5px;top:255.25px;width:72.89999999999999px">$47,123</div>
<div class="c r" style="left:320.7px;top:255.25px;width:62.2px">$16,873</div>
<div class="c r" style="left:385.2px;top:255.25px;width:57.89999999999999px">$47,123</div>
<div class="c r" style="left:445.4px;top:255.25px;width:54.000000000000014px">$16,873</div>
<div class="c r" style="left:501.7px;top:255.25px;width:63.60000000000004px">$47,123</div>
<div class="c r" style="left:567.6px;top:255.25px;width:45.800000000000026px">$16,873</div>
<div class="c r" style="left:615.7px;top:255.25px;width:67.39999999999993px">$21,089</div>
<div class="c r b" style="left:685.4px;top:255.25px;width:40.800000000000026px">$234,166</div>
<div class="c" style="left:25.8px;top:267.34px">4130 Product Revenue - Product Group C</div>
<div class="c r" style="left:181.5px;top:267.34px;width:61.7px">$33,064</div>
<div class="c r" style="left:245.5px;top:267.34px;width:72.89999999999999px">$56,677</div>
<div class="c r" style="left:320.7px;top:267.34px;width:62.2px">$25,696</div>
<div class="c r" style="left:385.2px;top:267.34px;width:57.89999999999999px">$56,677</div>
<div class="c r" style="left:445.4px;top:267.34px;width:54.000000000000014px">$25,696</div>
<div class="c r" style="left:501.7px;top:267.34px;width:63.60000000000004px">$56,677</div>
<div class="c r" style="left:567.6px;top:267.34px;width:45.800000000000026px">$25,696</div>
<div class="c r" style="left:615.7px;top:267.34px;width:67.39999999999993px">$33,064</div>
<div class="c r b" style="left:685.4px;top:267.34px;width:40.800000000000026px">$313,248</div>
<div class="c" style="left:25.8px;top:279.42px">4320 Maintenance Revenue - New Contracts</div>
<div class="c r b" style="left:685.4px;top:279.42px;width:40.800000000000026px">$0</div>
<div class="c b" style="left:25.8px;top:291.51px">Total Revenue</div>
<div class="c r b" style="left:181.5px;top:291.51px;width:61.7px">$66,936</div>
<div class="c r b" style="left:245.5px;top:291.51px;width:72.89999999999999px">$143,323</div>
<div class="c r b" style="left:320.7px;top:291.51px;width:62.2px">$132,310</div>
<div class="c r b" style="left:385.2px;top:291.51px;width:57.89999999999999px">$143,323</div>
<div class="c r b" style="left:445.4px;top:291.51px;width:54.000000000000014px">$132,310</div>
<div class="c r b" style="left:501.7px;top:291.51px;width:63.60000000000004px">$143,323</div>
<div class="c r b" style="left:567.6px;top:291.51px;width:45.800000000000026px">$132,310</div>
<div class="c r b" style="left:615.7px;top:291.51px;width:67.39999999999993px">$0</div>
<div class="c r b" style="left:685.4px;top:291.51px;width:40.800000000000026px">$1,274,018</div>
<div class="c" style="left:25.8px;top:315.67px">5511 Standard Cost</div>
<div class="c r" style="left:181.5px;top:315.67px;width:61.7px">$72,761</div>
<div class="c r" style="left:245.5px;top:315.67px;width:72.89999999999999px">$132,279</div>
<div class="c r" style="left:320.7px;top:315.67px;width:62.2px">$74,198</div>
<div class="c r" style="left:385.2px;top:315.67px;width:57.89999999999999px">$132,279</div>
<div class="c r" style="left:445.4px;top:315.67px;width:54.000000000000014px">$74,198</div>
<div class="c r" style="left:501.7px;top:315.67px;width:63.60000000000004px">$132,279</div>
<div class="c r" style="left:567.6px;top:315.67px;width:45.800000000000026px">$74,198</div>
<div class="c r" style="left:615.7px;top:315.67px;width:67.39999999999993px">$72,761</div>
<div class="c r b" style="left:685.4px;top:315.67px;width:40.800000000000026px">$764,954</div>
<div class="c" style="left:25.8px;top:327.76px">5512 Variable Cost /Freight</div>
<div class="c r" style="left:181.5px;top:327.76px;width:61.7px">$853</div>
<div class="c r" style="left:245.5px;top:327.76px;width:72.89999999999999px">$1,731</div>
<div class="c r" style="left:320.7px;top:327.76px;width:62.2px">$1,658</div>
<div class="c r" style="left:385.2px;top:327.76px;width:57.89999999999999px">$1,731</div>
<div class="c r" style="left:445.4px;top:327.76px;width:54.000000000000014px">$1,658</div>
<div class="c r" style="left:501.7px;top:327.76px;width:63.60000000000004px">$1,731</div>
<div class="c r" style="left:567.6px;top:327.76px;width:45.800000000000026px">$1,658</div>
<div class="c r" style="left:615.7px;top:327.76px;width:67.39999999999993px">$853</div>
<div class="c r b" style="left:685.4px;top:327.76px;width:40.800000000000026px">$11,872</div>
<div class="c b" style="left:25.8px;top:339.84px">Total Costs</div>
<div class="c r b" style="left:181.5px;top:339.84px;width:61.7px">$73,614</div>
<div class="c r b" style="left:245.5px;top:339.84px;width:72.89999999999999px">$134,010</div>
<div class="c r b" style="left:320.7px;top:339.84px;width:62.2px">$75,856</div>
<div class="c r b" style="left:385.2px;top:339.84px;width:57.89999999999999px">$134,010</div>
<div class="c r b" style="left:445.4px;top:339.84px;width:54.000000000000014px">$75,856</div>
<div class="c r b" style="left:501.7px;top:339.84px;width:63.60000000000004px">$134,010</div>
<div class="c r b" style="left:567.6px;top:339.84px;width:45.800000000000026px">$75,856</div>
<div class="c r b" style="left:615.7px;top:339.84px;width:67.39999999999993px">$73,614</div>
<div class="c r b" style="left:685.4px;top:339.84px;width:40.800000000000026px">$776,826</div>
<div class="c b" style="left:25.8px;top:364.01px">Margin</div>
<div class="c r b" style="left:181.5px;top:364.01px;width:61.7px">$26,386</div>
<div class="c r b" style="left:245.5px;top:364.01px;width:72.89999999999999px">$65,990</div>
<div class="c r b" style="left:320.7px;top:364.01px;width:62.2px">$82,150</div>
<div class="c r b" style="left:385.2px;top:364.01px;width:57.89999999999999px">$65,990</div>
<div class="c r b" style="left:445.4px;top:364.01px;width:54.000000000000014px">$82,150</div>
<div class="c r b" style="left:501.7px;top:364.01px;width:63.60000000000004px">$65,990</div>
<div class="c r b" style="left:567.6px;top:364.01px;width:45.800000000000026px">$82,150</div>
<div class="c r b" style="left:615.7px;top:364.01px;width:67.39999999999993px">$26,386</div>
<div class="c r b" style="left:685.4px;top:364.01px;width:40.800000000000026px">$497,191</div>
<div class="a" style="left:614.7px;top:386.228px;width:71.19999999999993px;height:13.584px;border:1.5px solid #1a56b8"></div>
<div class="a" style="left:682.9px;top:396.812px;width:5.4px;height:5.4px;border-radius:50%;background:#1a56b8"></div>
<div class="a" style="left:891.2px;top:168px;width:6.3px;height:396px;background:#fff"></div>
<div class="a" style="left:897.2px;top:141px;width:1px;height:423px;background:#e6e6ea"></div>
<div class="a" style="left:892px;top:183px;width:4.4px;height:14.6px;border-radius:2.2px;background:#d3d5d9"></div>
<div class="a" style="left:0;top:556.9px;width:891px;height:7px;background:#fff"></div>
<div class="a" style="left:25px;top:558px;width:405px;height:4.6px;border-radius:2.3px;background:#d0d1d6"></div>
<div class="a" style="left:891.4px;top:538.6px;width:6px;height:8.3px;background:#f4f4f6"></div>
<div class="a" style="left:891.4px;top:547.4px;width:6px;height:8.6px;background:#f4f4f6"></div>
<div class="a" style="left:872.2px;top:557px;width:8.7px;height:6.4px;background:#f4f4f6"></div>
<div class="a" style="left:881.4px;top:557px;width:9.4px;height:6.4px;background:#f4f4f6"></div>
<svg style="left:893px;top:541.6px" width="3" height="2.4"><path d="M0 2.4 L1.5 0 L3 2.4Z" fill="#777"/></svg>
<svg style="left:893px;top:550.6px" width="3" height="2.4"><path d="M0 0 L1.5 2.4 L3 0Z" fill="#777"/></svg>
<svg style="left:875.8px;top:558.7px" width="2.4" height="3"><path d="M2.4 0 L0 1.5 L2.4 3Z" fill="#777"/></svg>
<svg style="left:885.2px;top:558.7px" width="2.4" height="3"><path d="M0 0 L2.4 1.5 L0 3Z" fill="#777"/></svg>
<div class="a" style="left:0;top:565px;width:1100px;height:19px;background:#fbfcfe"></div>
<div class="a" style="left:268px;top:565px;width:88.5px;height:19px;background:#e1e9f7"></div>
<div class="a" style="left:357px;top:565px;width:71.5px;height:19px;background:#eeeeee"></div>
<svg style="left:29px;top:571.5px" width="8" height="8"><path d="M4 0.5 V7.5 M0.5 4 H7.5" stroke="#444746" stroke-width="1.25" fill="none"/></svg>
<svg style="left:52px;top:572px" width="8" height="7"><path d="M0 1 H8 M0 3.5 H8 M0 6 H8" stroke="#444746" stroke-width="1.1" fill="none"/></svg>
<div class="t" style="left:82.50px;top:571.88px;font-size:9.0px;color:#444746;transform:scaleX(0.9896);transform-origin:left top;">Profit &amp; Loss</div>
<div class="car" style="left:140.1px;top:574.8px;"></div>
<div class="t" style="left:159.00px;top:571.88px;font-size:9.0px;color:#444746;transform:scaleX(0.9543);transform-origin:left top;">Sheet33</div>
<div class="car" style="left:197.6px;top:574.8px;"></div>
<div class="t" style="left:217.00px;top:571.88px;font-size:9.0px;color:#444746;transform:scaleX(0.9543);transform-origin:left top;">Sheet52</div>
<div class="car" style="left:255.6px;top:574.8px;"></div>
<div class="t" style="left:275.00px;top:571.88px;font-size:9.0px;color:#1a56c4;transform:scaleX(0.9541);transform-origin:left top;font-weight:bold;">New Rev report</div>
<div class="car" style="left:344.1px;top:574.8px;border-top-color:#1a56c4;"></div>
<div class="t" style="left:363.00px;top:571.88px;font-size:9.0px;color:#444746;">Demo Pivot</div>
<div class="car" style="left:415.6px;top:574.8px;"></div>
<div class="t" style="left:434.50px;top:571.88px;font-size:9.0px;color:#444746;transform:scaleX(0.9814);transform-origin:left top;">Vendor</div>
<div class="car" style="left:469.1px;top:574.8px;"></div>
<div class="t" style="left:488.00px;top:571.88px;font-size:9.0px;color:#444746;transform:scaleX(0.9692);transform-origin:left top;">Sheet51</div>
<div class="car" style="left:526.6px;top:574.8px;"></div>
<div class="t" style="left:544.50px;top:571.88px;font-size:9.0px;color:#444746;">Prepaid</div>
<div class="car" style="left:581.6px;top:574.8px;"></div>
<div class="t" style="left:601.00px;top:571.88px;font-size:9.0px;color:#444746;">OfficeExpense</div>
<div class="car" style="left:665.6px;top:574.8px;"></div>
<div class="t" style="left:685.00px;top:571.88px;font-size:9.0px;color:#444746;transform:scaleX(0.9692);transform-origin:left top;">Sheet49</div>
<div class="car" style="left:724.1px;top:574.8px;"></div>
<div class="t" style="left:743.50px;top:571.88px;font-size:9.0px;color:#444746;transform:scaleX(0.9688);transform-origin:left top;">Revenue Report</div>
<div class="car" style="left:813.6px;top:574.8px;"></div>
<div class="t" style="left:832.50px;top:571.88px;font-size:9.0px;color:#444746;transform:scaleX(0.9886);transform-origin:left top;">New Export</div>
<div class="car" style="left:884.6px;top:574.8px;"></div>
<div class="t" style="left:904.00px;top:571.88px;font-size:9.0px;color:#444746;transform:scaleX(0.7692);transform-origin:left top;">C</div>
<div class="a" style="left:910px;top:565px;width:99px;height:19px;background:#fff"></div>
<svg style="left:919.5px;top:572px" width="4" height="6"><path d="M3.5 0.5 L0.7 3 L3.5 5.5" stroke="#b0b3b8" stroke-width="0.9" fill="none"/></svg>
<svg style="left:943px;top:572px" width="4" height="6"><path d="M0.5 0.5 L3.3 3 L0.5 5.5" stroke="#444746" stroke-width="0.9" fill="none"/></svg>
<div class="a" style="left:1010px;top:564px;width:1.4px;height:20px;background:#e4e4ec"></div>
<div class="a" style="left:0;top:563.6px;width:1071px;height:1px;background:#eeeef2"></div>
<div class="a" style="left:1018.8px;top:570.9px;width:8.4px;height:8.4px;background:#188c58;border-radius:1.2px"></div>
<svg style="left:1020.5px;top:572.6px" width="5" height="5"><path d="M2.5 0 L3.2 1.8 L5 2.5 L3.2 3.2 L2.5 5 L1.8 3.2 L0 2.5 L1.8 1.8Z" fill="#fff"/></svg>
<div class="t" style="left:1036.40px;top:571.54px;font-size:7.4px;color:#23926a;transform:scaleX(0.8858);transform-origin:left top;">Explore</div>
<div class="a" style="left:897px;top:121px;width:174.5px;height:444px;background:#fff;border-left:1px solid #e3e3e3"></div>
<div class="a" style="left:897.5px;top:121.4px;width:173.3px;height:20.2px;background:#616161"></div>
<div class="t" style="left:905.50px;top:127.71px;font-size:7.9px;color:#fff;transform:scaleX(0.8992);transform-origin:left top;font-weight:bold;">DataBlend - Report Details</div>
<svg style="left:1056.5px;top:128px" width="7" height="7"><path d="M0.5 0.5 L6.5 6.5 M6.5 0.5 L0.5 6.5" stroke="#fff" stroke-width="1.35" fill="none"/></svg>
<div class="t" style="left:905.30px;top:159.87px;font-size:8.3px;color:#44474a;transform:scaleX(0.8962);transform-origin:left top;">Select data source</div>
<div class="sel" style="top:169.8px;width:160px"></div>
<div class="t" style="left:907.80px;top:175.17px;font-size:7.0px;color:#2b2b2b;transform:scaleX(0.9596);transform-origin:left top;text-shadow:0.3px 0 0 #2b2b2b;">MayCollector Data Source</div>
<svg style="left:1052.2px;top:174.70000000000002px" width="4" height="7"><path d="M0 2.6 L2 0.3 L4 2.6Z M0 4.4 L2 6.7 L4 4.4Z" fill="#333"/></svg>
<div class="t" style="left:905.30px;top:196.17px;font-size:8.3px;color:#44474a;transform:scaleX(0.8985);transform-origin:left top;">Select schema</div>
<div class="sel" style="top:206.4px;width:81.5px"></div>
<div class="t" style="left:907.80px;top:211.77px;font-size:7.0px;color:#2b2b2b;transform:scaleX(0.9566);transform-origin:left top;text-shadow:0.3px 0 0 #2b2b2b;">MayCollector Schema</div>
<svg style="left:977.3px;top:211.3px" width="4" height="7"><path d="M0 2.6 L2 0.3 L4 2.6Z M0 4.4 L2 6.7 L4 4.4Z" fill="#333"/></svg>
<div class="t" style="left:905.30px;top:232.37px;font-size:8.3px;color:#44474a;transform:scaleX(0.8972);transform-origin:left top;">Select report query</div>
<div class="sel" style="top:242.3px;width:160px"></div>
<div class="t" style="left:907.80px;top:247.67px;font-size:7.0px;color:#2b2b2b;transform:scaleX(0.9733);transform-origin:left top;text-shadow:0.3px 0 0 #2b2b2b;">MayCollector query</div>
<svg style="left:1052.2px;top:247.20000000000002px" width="4" height="7"><path d="M0 2.6 L2 0.3 L4 2.6Z M0 4.4 L2 6.7 L4 4.4Z" fill="#333"/></svg>
<div class="t" style="left:905.30px;top:268.77px;font-size:8.3px;color:#44474a;transform:scaleX(0.8944);transform-origin:left top;">Workflows</div>
<div class="sel" style="top:278.7px;width:160px"></div>
<div class="t" style="left:907.80px;top:284.07px;font-size:7.0px;color:#2b2b2b;transform:scaleX(0.9769);transform-origin:left top;text-shadow:0.3px 0 0 #2b2b2b;">MayCollector Workflow</div>
<svg style="left:1052.2px;top:283.59999999999997px" width="4" height="7"><path d="M0 2.6 L2 0.3 L4 2.6Z M0 4.4 L2 6.7 L4 4.4Z" fill="#333"/></svg>
<div class="btn" style="left:905px;width:41.5px">Save</div>
<div class="btn" style="left:953.3px;width:47.5px">Select fields</div>
<div class="btn" style="left:1007.7px;width:41.5px">Back</div>
<div class="a" style="left:1071.5px;top:121px;width:28.5px;height:444px;background:#fff"></div>
<!-- right rail icons, centre x=1086.8 -->
<!-- calendar -->
<svg style="left:1081.2px;top:131.2px" width="11" height="11" viewBox="0 0 11 11">
<rect x="0" y="0" width="11" height="11" rx="1.2" fill="#4285f4"/>
<rect x="8.4" y="2.4" width="2.6" height="6.2" fill="#fbbc04"/>
<rect x="2.4" y="8.4" width="6.2" height="2.6" fill="#34a853"/>
<path d="M0 8.4 H2.4 V11 H1.2 A1.2 1.2 0 0 1 0 9.8Z" fill="#188038"/>
<path d="M8.4 8.4 H11 L8.4 11Z" fill="#ea4335"/>
<path d="M8.4 0 H9.8 A1.2 1.2 0 0 1 11 1.2 V2.4 H8.4Z" fill="#1967d2"/>
<rect x="2.1" y="2.1" width="6.5" height="6.5" fill="#fff"/>
<text x="2.9" y="7.3" font-family="Liberation Sans, sans-serif" font-size="4.6" fill="#1a73e8">31</text>
</svg>
<!-- keep -->
<svg style="left:1080.8px;top:163.7px" width="11.4" height="10.8" viewBox="0 0 11.4 10.8">
<rect width="11.4" height="10.8" rx="1.4" fill="#fbbc04"/>
<path d="M5.7 2.2 A2.5 2.5 0 0 1 7.2 6.7 V7.4 H4.2 V6.7 A2.5 2.5 0 0 1 5.7 2.2Z" fill="#fff"/>
<rect x="4.4" y="8" width="2.6" height="1" fill="#fff"/>
</svg>
<!-- tasks -->
<svg style="left:1081.8px;top:196px" width="10.6" height="10.6" viewBox="0 0 10.6 10.6">
<path d="M9.4 4.6 A4.3 4.3 0 1 1 6.8 1.3" stroke="#1a73e8" stroke-width="1.5" fill="none"/>
<path d="M3.2 5 L5 6.8 L10 1.4" stroke="#1a73e8" stroke-width="1.5" fill="none"/>
</svg>
<!-- contacts -->
<svg style="left:1083px;top:229px" width="8.2" height="9.4" viewBox="0 0 8.2 9.4">
<circle cx="4.1" cy="2.2" r="2.1" fill="#1a73e8"/>
<path d="M0 9.4 V7.4 C0 4.6 8.2 4.6 8.2 7.4 V9.4Z" fill="#1a73e8"/>
</svg>
<!-- maps pin -->
<svg style="left:1083.4px;top:261px" width="7.4" height="9.8" viewBox="0 0 7.4 9.8">
<defs><clipPath id="pinclip"><path d="M3.7 0 A3.7 3.7 0 0 1 7.4 3.7 C7.4 6 4.4 7.4 3.7 9.8 C3 7.4 0 6 0 3.7 A3.7 3.7 0 0 1 3.7 0Z"/></clipPath></defs>
<g clip-path="url(#pinclip)">
<rect width="7.4" height="9.8" fill="#34a853"/>
<path d="M0 0 H3.7 V3.7 L0 6Z" fill="#ea4335"/>
<path d="M3.7 0 H7.4 V3.7 H3.7Z" fill="#4285f4"/>
<path d="M0 6.5 L4.6 1.6 L5.8 2.8 L1.4 7.6Z" fill="#fbbc04"/>
</g>
<circle cx="3.7" cy="3.7" r="1.3" fill="#fff"/>
</svg>
<div class="a" style="left:1081.4px;top:291.2px;width:12.6px;height:1px;background:#dfe3ee"></div>
<svg style="left:1083px;top:313px" width="8.2" height="8.2" viewBox="0 0 8.2 8.2"><path d="M4.1 0 V8.2 M0 4.1 H8.2" stroke="#202124" stroke-width="1.2"/></svg>

<svg style="left:1085.3px;top:566.6px" width="3.6" height="5.4"><path d="M0.5 0.4 L3 2.7 L0.5 5" stroke="#3a3d41" stroke-width="1.2" fill="none"/></svg>
</body></html>
